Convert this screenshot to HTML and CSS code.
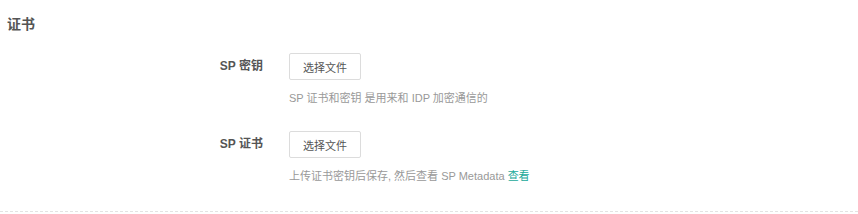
FILE: index.html
```html
<!DOCTYPE html>
<html lang="zh-CN">
<head>
<meta charset="UTF-8">
<title>证书</title>
<link rel="stylesheet" href="styles.css">
</head>
<body>
<div class="section">
    <div class="section-title">证书</div>

    <div class="form-row">
        <label class="form-label">SP 密钥</label>
        <div class="form-control">
            <button class="file-button">选择文件</button>
            <div class="form-help">SP 证书和密钥 是用来和 IDP 加密通信的</div>
        </div>
    </div>

    <div class="form-row">
        <label class="form-label">SP 证书</label>
        <div class="form-control">
            <button class="file-button">选择文件</button>
            <div class="form-help">上传证书密钥后保存, 然后查看 SP Metadata <a class="help-link" href="#">查看</a></div>
        </div>
    </div>
</div>
</body>
</html>
```

FILE: styles.css
```css
body {
    margin: 0;
    padding: 0;
    background-color: #fff;
    font-family: "Liberation Sans", "Noto Sans CJK SC", sans-serif;
    color: #555;
}

.section {
    padding: 14px 0 26px 6px;
    border-bottom: 1px dashed #e3e3e3;
}

.section-title {
    padding-left: 1px;
    font-size: 14px;
    font-weight: bold;
    line-height: 20px;
    color: #555;
    margin-bottom: 19px;
}

.form-row {
    display: grid;
    grid-template-columns: 257px 1fr;
    column-gap: 26px;
    margin-bottom: 24px;
}

.form-row:last-child {
    margin-bottom: 0;
}

.form-label {
    text-align: right;
    font-size: 12px;
    font-weight: bold;
    line-height: 27px;
    color: #555;
}

.file-button {
    display: block;
    width: 72px;
    height: 27px;
    padding: 0;
    background-color: #fff;
    border: 1px solid #dcdcdc;
    border-radius: 2px;
    font-family: "Liberation Sans", "Noto Sans CJK SC", sans-serif;
    font-size: 11px;
    color: #555;
    cursor: pointer;
}

.form-help {
    margin-top: 9px;
    font-size: 11px;
    line-height: 18px;
    color: #999;
}

.help-link {
    color: #1aa99a;
    text-decoration: none;
}
```
